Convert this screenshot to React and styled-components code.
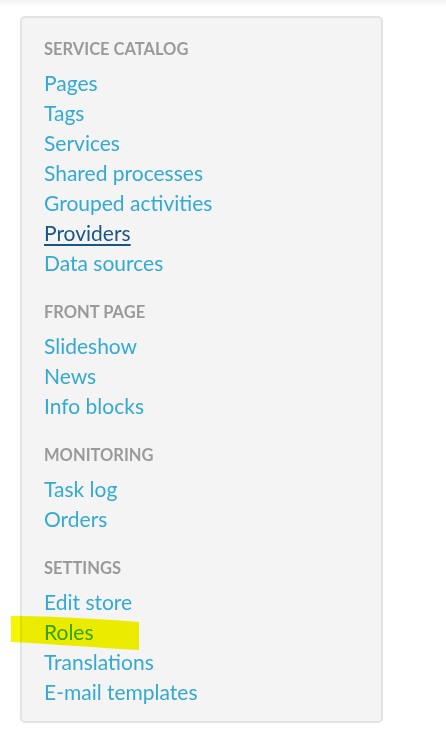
import React from "react";
import styled, { createGlobalStyle } from "styled-components";

const Global = createGlobalStyle`
  html, body { margin: 0; padding: 0; background: #fff; }
  body { font-family: Lato, "Noto Sans", sans-serif; }
`;

const Page = styled.div`
  position: relative;
  padding: 16px 0 0 20px;
  &::before {
    content: "";
    position: absolute;
    left: 0; right: 0; top: 0;
    height: 7px;
    background: linear-gradient(#f3f3f3, #ffffff);
  }
`;

const Panel = styled.nav`
  position: relative;
  box-sizing: border-box;
  width: 363px;
  background: #f4f4f4;
  border: 2px solid #e3e3e3;
  border-radius: 5px;
  padding: 21px 22px 14px 22px;
`;

const Section = styled.section`
  & + & { margin-top: 24px; }
`;

const Heading = styled.h3`
  margin: 0 0 9px 0;
  font-size: 16.5px;
  line-height: 20px;
  font-weight: 700;
  color: #9a9a9a;
  text-transform: uppercase;
`;

const List = styled.ul`
  list-style: none;
  margin: 0;
  padding: 0;
`;

const Item = styled.li`
  position: relative;
  font-size: 21px;
  line-height: 30px;
`;

const Link = styled.a`
  position: relative;
  z-index: 1;
  color: ${(p) => (p.$active ? "#1a5584" : "#34a9d2")};
  text-decoration: ${(p) => (p.$active ? "underline" : "none")};
  text-decoration-thickness: 2px;
  text-underline-offset: 3px;
  cursor: pointer;
`;

const Highlight = styled.svg`
  position: absolute;
  left: -33px;
  top: -1px;
  width: 130px;
  height: 34px;
  z-index: 2;
  mix-blend-mode: multiply;
  pointer-events: none;
`;

const sections = [
  { title: "Service catalog", items: ["Pages", "Tags", "Services", "Shared processes", "Grouped activities", "Providers", "Data sources"] },
  { title: "Front page", items: ["Slideshow", "News", "Info blocks"] },
  { title: "Monitoring", items: ["Task log", "Orders"] },
  { title: "Settings", items: ["Edit store", "Roles", "Translations", "E-mail templates"] },
];

export default function App() {
  return (
    <>
      <Global />
      <Page>
        <Panel>
          {sections.map((s) => (
            <Section key={s.title}>
              <Heading>{s.title}</Heading>
              <List>
                {s.items.map((it) => (
                  <Item key={it}>
                    <Link $active={it === "Providers"}>{it}</Link>
                    {it === "Roles" && (
                      <Highlight viewBox="0 0 130 34">
                        <path d="M0 0 C30 0 60 1 128 6 L128 34 C90 32 40 28 0 26 Z" fill="#f6f600" />
                      </Highlight>
                    )}
                  </Item>
                ))}
              </List>
            </Section>
          ))}
        </Panel>
      </Page>
    </>
  );
}
